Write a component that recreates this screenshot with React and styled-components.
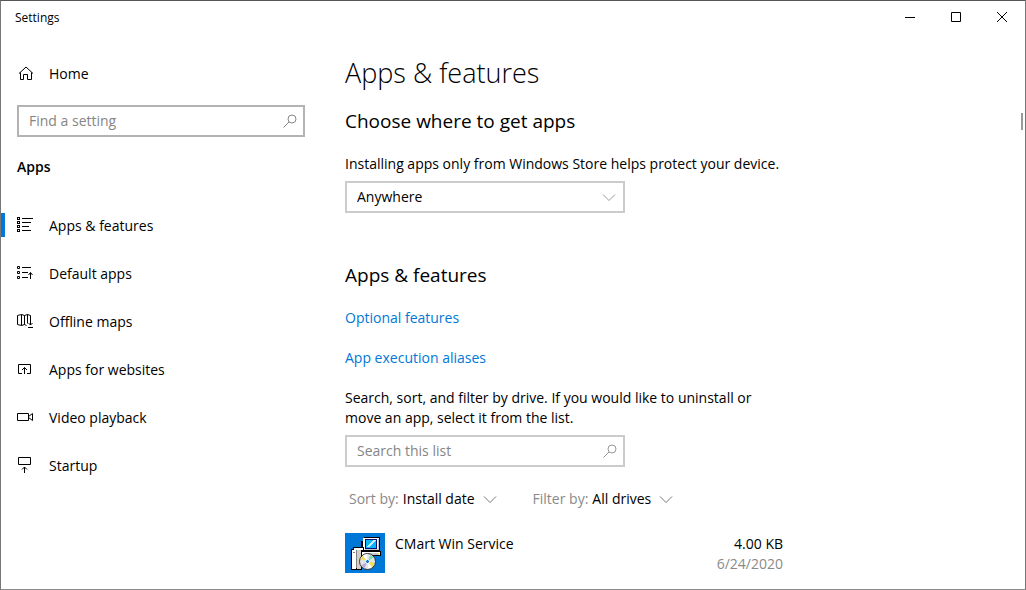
import React, { useState } from 'react'
import styled, { createGlobalStyle } from 'styled-components'

const GlobalStyle = createGlobalStyle`
  *, *::before, *::after {
    box-sizing: border-box;
  }
  body {
    margin: 0;
    background: #fff;
    color: #000;
    font-family: 'Open Sans', 'Noto Sans', sans-serif;
    font-size: 14px;
    line-height: 20px;
  }
  button, input, select {
    font: inherit;
    color: inherit;
  }
`

const Window = styled.div`
  display: flex;
  flex-direction: column;
  height: 100vh;
  overflow: hidden;
  border: 1px solid #777;
  border-top-color: #555;
  border-bottom-color: #8a8a8a;
`

const TitleBar = styled.header`
  display: flex;
  flex: none;
  align-items: center;
  justify-content: space-between;
  height: 32px;
  padding-left: 14px;
  font-size: 12px;
`

const WindowTitle = styled.span`
  padding-top: 2px;
`

const Caption = styled.div`
  display: flex;
`

const CaptionButton = styled.button`
  display: flex;
  align-items: center;
  justify-content: center;
  width: 46px;
  height: 32px;
  padding: 0;
  border: 0;
  background: none;
`

const Body = styled.div`
  display: grid;
  grid-template-columns: 304px minmax(0, 1fr) 4px;
  column-gap: 40px;
  flex: 1;
  min-height: 0;
`

const Sidebar = styled.aside`
  padding-top: 16px;
`

const NavLink = styled.a`
  display: flex;
  align-items: center;
  gap: 16px;
  height: 48px;
  padding-left: 12px;
  border-left: 4px solid transparent;
  border-image: linear-gradient(
      transparent 12px,
      ${({ $active }) => ($active ? '#0078d7' : 'transparent')} 12px 36px,
      transparent 36px
    )
    0 0 0 4;
  color: inherit;
  text-decoration: none;
`

const NavLabel = styled.span`
  padding-top: 2px;
`

const SideTitle = styled.h2`
  margin: 20px 0 24px 16px;
  font-size: 14px;
  font-weight: 600;
  line-height: 20px;
`

const SearchField = styled.label`
  display: flex;
  align-items: center;
  justify-content: space-between;
  max-width: ${({ $sidebar }) => ($sidebar ? '288px' : '280px')};
  height: 32px;
  margin: ${({ $sidebar }) => ($sidebar ? '8px 0 0 16px' : '7px 0 0')};
  padding: 0 5px 0 10px;
  border: 2px solid ${({ $sidebar }) => ($sidebar ? '#b3b3b3' : '#ccc')};
`

const SearchInput = styled.input`
  flex: 1;
  min-width: 0;
  padding: 0;
  border: 0;
  outline: 0;
  background: none;

  &::placeholder {
    color: #858585;
    opacity: 1;
  }
`

const Content = styled.main`
  padding-top: 20px;
`

const PageTitle = styled.h1`
  margin: 0;
  font-size: 27px;
  font-weight: 300;
  line-height: 40px;
`

const SectionTitle = styled.h2`
  margin: ${({ $first }) => ($first ? '15px' : '49px')} 0 0;
  font-size: 19px;
  font-weight: 400;
  line-height: 26px;
`

const Text = styled.p`
  max-width: 438px;
  margin: 20px 0 0;
`

const SelectBox = styled.div`
  display: grid;
  align-items: center;
  max-width: 280px;
  height: 32px;
  margin-top: 7px;
  border: 2px solid #ccc;

  & > * {
    grid-area: 1 / 1;
  }
  svg {
    justify-self: end;
    margin-right: 7px;
    pointer-events: none;
  }
`

const Select = styled.select`
  width: 100%;
  height: 100%;
  padding: 0 32px 0 10px;
  border: 0;
  appearance: none;
  background: none;
`

const PageLink = styled.a`
  display: block;
  width: fit-content;
  margin-top: 20px;
  color: #0078d7;
  text-decoration: none;
`

const Filters = styled.div`
  display: flex;
  gap: 36px;
  margin: 22px 0 24px 4px;
`

const Filter = styled.label`
  display: flex;
  align-items: center;
  gap: 4px;
  color: #8a8a8a;

  svg {
    margin-left: 4px;
  }
`

const InlineSelect = styled.select`
  field-sizing: content;
  padding: 0;
  border: 0;
  appearance: none;
  background: none;
  color: #000;
`

const AppRow = styled.article`
  display: flex;
  align-items: flex-start;
  gap: 10px;
  max-width: 438px;
`

const AppName = styled.div`
  flex: 1;
  padding-top: 1px;
`

const AppMeta = styled.div`
  padding-top: 1px;
  text-align: right;
`

const Muted = styled.div`
  color: #8a8a8a;
`

const ScrollThumb = styled.div`
  width: 2px;
  height: 17px;
  margin-top: 80px;
  background: #9a9a9a;
`

const Icon = ({ children, size = 16, color = '#000', ...rest }) => (
  <svg width={size} height={size} viewBox={`0 0 ${size} ${size}`} fill="none" stroke={color} aria-hidden="true" {...rest}>
    {children}
  </svg>
)

const SearchIcon = ({ color }) => (
  <Icon color={color}>
    <circle cx="10" cy="6" r="4" />
    <path d="M7 9L1.5 14.5" />
  </Icon>
)

const Chevron = ({ color = '#777' }) => (
  <Icon color={color} size={14}>
    <path d="M1 4.5l6 6 6-6" />
  </Icon>
)

const HomeIcon = () => (
  <Icon>
    <path d="M2 8.5l7-6.500 7 6.500M3.500 7.500v7h3v-5h4v5h4v-7" />
  </Icon>
)

const AppsIcon = () => (
  <Icon shapeRendering="crispEdges">
    <path d="M.5 .5h2v2h-2zM.5 4.5h2v2h-2zM.5 8.5h2v2h-2zM.5 12.5h2v2h-2z" />
    <path d="M5 1.5h11M5 5.5h9M5 9.5h7M5 13.5h9" />
  </Icon>
)

const DefaultsIcon = () => (
  <Icon>
    <path d="M.5 1.5h2v2h-2zM.5 6.5h2v2h-2zM.5 11.5h2v2h-2z" />
    <path d="M5 2.5h9M5 7.5h6M5 12.5h6M13.5 14V7.5M11.5 10l2-2.5 2 2.5" />
  </Icon>
)

const MapsIcon = () => (
  <Icon>
    <path d="M9.500 12.500l-2-1-3 1-4-1v-9l4-1 3 1 3-1 3 1V5M4.500 1.500v11M7.500 2.500v9M10.500 1.500v9" />
    <path d="M13.500 5v7M11.500 10l2 2 2-2M11 14.500h5" />
  </Icon>
)

const WebsitesIcon = () => (
  <Icon>
    <path d="M5 12.5H1.5v-9h12v9H10M7.5 13V6.500M5 9l2.500-2.500L10 9" />
  </Icon>
)

const VideoIcon = () => (
  <Icon>
    <path d="M.5 4.5h11v7H.5zM11.5 7.500l4-3v7l-4-3" />
  </Icon>
)

const StartupIcon = () => (
  <Icon>
    <path d="M1.500 .5h12v7h-12zM7.500 16V10M5 12.500L7.500 10l2.500 2.500" />
  </Icon>
)

// classic setup.exe drawing: monitor, open box and disc
const InstallerIcon = () => (
  <svg width="40" height="40" viewBox="0 0 40 40" aria-hidden="true">
    <path fill="#0078d7" d="M0 0h40v40H0z" />
    <g shapeRendering="crispEdges">
      <path fill="#000" d="M19 4h16v14h1v5H16V8h3z" />
      <path fill="#fff" d="M18 5h16v12H18zM17 19h18v3H17z" />
      <path fill="#c6c6c6" d="M33 6h1v11H20v-1h13zM24 20h10v2H24z" />
      <path fill="#00107c" d="M20 6h12v10H20z" />
      <path fill="#0cb4f5" d="M21 7h10v8H21z" />
      <path fill="#b9efff" d="M22 13h1v-1h1v-1h1v-1h1V9h1V8h1V7h3v1h-1v1h-1v1h-1v1h-1v1h-1v1h-1v1h-3z" />
      <path fill="#ffe03a" d="M32 20h2v1h-2z" />
      <path fill="#000" d="M6 16h2v-2h11v3h-2v20H6z" />
      <path fill="#fff" d="M7 17h4v19H7zM9 15h9v2H9z" />
      <path fill="#d4d0c8" d="M12 17h4v19h-4z" />
      <path fill="#808080" d="M11 17h1v18h-1zM8 19h2v1H8z" />
    </g>
    <circle cx="22.500" cy="28.500" r="8" fill="#e4e4e4" stroke="#333" strokeWidth="1" />
    <path fill="#fff" d="M22.500 28.500L18 22.500l4-1.500zM22.500 28.500l4.500 6-4 1z" />
    <path fill="#f6e04a" d="M22.500 28.500L15.500 26l2-3zM22.500 28.500l7 1.500-2 4z" />
    <path fill="#7fd7b0" d="M22.500 28.500l3-7 3 3z" />
    <path fill="#b9a5e0" d="M22.500 28.500l-6 4 3 2.500z" />
    <circle cx="22.500" cy="28.500" r="2" fill="#0078d7" stroke="#fff" />
  </svg>
)

const navItems = [
  { label: 'Apps & features', icon: AppsIcon },
  { label: 'Default apps', icon: DefaultsIcon },
  { label: 'Offline maps', icon: MapsIcon },
  { label: 'Apps for websites', icon: WebsitesIcon },
  { label: 'Video playback', icon: VideoIcon },
  { label: 'Startup', icon: StartupIcon }
]

const apps = [{ name: 'CMart Win Service', size: '4.00 KB', date: '6/24/2020' }]

export default function App() {
  const [active, setActive] = useState('Apps & features')

  return (
    <>
      <GlobalStyle />
      <Window>
        <TitleBar>
          <WindowTitle>Settings</WindowTitle>
          <Caption>
            <CaptionButton aria-label="Minimize">
              <Icon size={10}>
                <path d="M0 5.5h10" />
              </Icon>
            </CaptionButton>
            <CaptionButton aria-label="Maximize">
              <Icon size={10}>
                <path d="M.5 .5h9v9h-9z" />
              </Icon>
            </CaptionButton>
            <CaptionButton aria-label="Close">
              <Icon size={10}>
                <path d="M0 0l10 10M10 0L0 10" />
              </Icon>
            </CaptionButton>
          </Caption>
        </TitleBar>
        <Body>
          <Sidebar>
            <NavLink href="#home">
              <HomeIcon />
              <NavLabel>Home</NavLabel>
            </NavLink>
            <SearchField $sidebar>
              <SearchInput placeholder="Find a setting" aria-label="Find a setting" />
              <SearchIcon color="#888" />
            </SearchField>
            <SideTitle>Apps</SideTitle>
            <nav>
              {navItems.map(({ label, icon: ItemIcon }) => (
                <NavLink key={label} href="#" $active={label === active} onClick={() => setActive(label)}>
                  <ItemIcon />
                  <NavLabel>{label}</NavLabel>
                </NavLink>
              ))}
            </nav>
          </Sidebar>
          <Content>
            <PageTitle>Apps &amp; features</PageTitle>
            <SectionTitle $first>Choose where to get apps</SectionTitle>
            <Text>Installing apps only from Windows Store helps protect your device.</Text>
            <SelectBox>
              <Select aria-label="Choose where to get apps">
                <option>Anywhere</option>
              </Select>
              <Chevron color="#999" />
            </SelectBox>
            <SectionTitle>Apps &amp; features</SectionTitle>
            <PageLink href="#optional">Optional features</PageLink>
            <PageLink href="#aliases">App execution aliases</PageLink>
            <Text>
              Search, sort, and filter by drive. If you would like to uninstall or move an app, select it from the list.
            </Text>
            <SearchField>
              <SearchInput placeholder="Search this list" aria-label="Search this list" />
              <SearchIcon color="#999" />
            </SearchField>
            <Filters>
              <Filter>
                Sort by:
                <InlineSelect>
                  <option>Install date</option>
                </InlineSelect>
                <Chevron />
              </Filter>
              <Filter>
                Filter by:
                <InlineSelect>
                  <option>All drives</option>
                </InlineSelect>
                <Chevron />
              </Filter>
            </Filters>
            {apps.map(app => (
              <AppRow key={app.name}>
                <InstallerIcon />
                <AppName>{app.name}</AppName>
                <AppMeta>
                  <div>{app.size}</div>
                  <Muted>{app.date}</Muted>
                </AppMeta>
              </AppRow>
            ))}
          </Content>
          <ScrollThumb />
        </Body>
      </Window>
    </>
  )
}
